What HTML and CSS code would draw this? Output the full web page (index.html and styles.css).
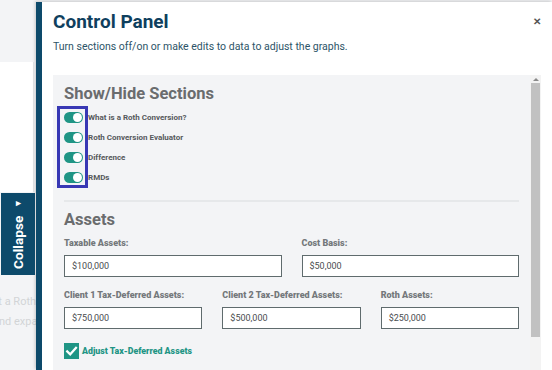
FILE: index.html
```html
<!DOCTYPE html>
<html lang="en">
<head>
<meta charset="utf-8">
<title>Control Panel</title>
<link rel="stylesheet" href="styles.css">
</head>
<body>
<main class="page">
  <div class="page-card"></div>
  <p class="ghost ghost-1">what a Roth</p>
  <p class="ghost ghost-2">and expa</p>
</main>

<aside class="drawer">
  <button class="collapse" type="button"><span class="collapse-label">Collapse <span class="caret">&#9660;</span></span></button>

  <header class="drawer-head">
    <div>
      <h1 class="title">Control Panel</h1>
      <p class="subtitle">Turn sections off/on or make edits to data to adjust the graphs.</p>
    </div>
    <button class="close" type="button" aria-label="Close">&#x2715;</button>
  </header>

  <div class="scroll-wrap">
    <div class="scroll">
      <section class="section">
        <h2 class="section-title">Show/Hide Sections</h2>
        <ul class="toggles">
          <li class="toggle-row"><span class="switch"></span><span class="toggle-label">What is a Roth Conversion?</span></li>
          <li class="toggle-row"><span class="switch"></span><span class="toggle-label">Roth Conversion Evaluator</span></li>
          <li class="toggle-row"><span class="switch"></span><span class="toggle-label">Difference</span></li>
          <li class="toggle-row"><span class="switch"></span><span class="toggle-label">RMDs</span></li>
          <li class="highlight" aria-hidden="true"></li>
        </ul>
      </section>
      <hr class="divider">
      <section class="section">
        <h2 class="section-title assets-title">Assets</h2>
        <div class="grid grid-2">
          <label class="field"><span class="field-label">Taxable Assets:</span><span class="input">$100,000</span></label>
          <label class="field"><span class="field-label">Cost Basis:</span><span class="input">$50,000</span></label>
        </div>
        <div class="grid grid-3">
          <label class="field"><span class="field-label">Client 1 Tax-Deferred Assets:</span><span class="input">$750,000</span></label>
          <label class="field"><span class="field-label">Client 2 Tax-Deferred Assets:</span><span class="input">$500,000</span></label>
          <label class="field"><span class="field-label">Roth Assets:</span><span class="input">$250,000</span></label>
        </div>
        <div class="check-row">
          <span class="checkbox"><svg width="15" height="16" viewBox="0 0 15 16"><path d="M3.2 8.4 L6.2 11.3 L12 4.8" fill="none" stroke="#fff" stroke-width="2.2" stroke-linecap="square"/></svg></span>
          <span class="check-label">Adjust Tax-Deferred Assets</span>
        </div>
      </section>
    </div>
    <div class="scrollbar">
      <span class="sb-arrow"></span>
      <span class="sb-thumb"></span>
    </div>
  </div>
</aside>
</body>
</html>
```

FILE: styles.css
```css
* { box-sizing: border-box; }

html, body {
  margin: 0;
  width: 552px;
  height: 370px;
  overflow: hidden;
}

body {
  background: #f3f4f6;
  font-family: Roboto, "Liberation Sans", sans-serif;
  position: relative;
}

.page {
  width: 36px;
  height: 370px;
  overflow: hidden;
  padding-top: 62px;
}

.page-card {
  width: 34px;
  height: 130px;
  background: #ffffff;
  border-right: 1px solid #e4e6e8;
}

.ghost {
  margin: 0;
  white-space: nowrap;
  font-size: 11px;
  line-height: 20px;
  color: #d2d4d6;
}

.ghost-1 { margin-top: 100px; margin-left: -22px; }
.ghost-2 { margin-left: -7px; }

.drawer {
  position: absolute;
  left: 36px;
  top: 2px;
  right: 0;
  bottom: 0;
  background: #ffffff;
  border-left: 6px solid #0d4a6b;
  box-shadow: -1px -1px 3px rgba(0, 0, 0, 0.18);
  padding: 0 11px;
  display: flex;
  flex-direction: column;
}

.collapse {
  position: absolute;
  left: -41px;
  top: 191px;
  width: 34px;
  height: 82px;
  border: 0;
  padding: 0;
  background: #0d4a6b;
  color: #fff;
  display: flex;
  align-items: center;
  justify-content: center;
  cursor: pointer;
}

.collapse-label {
  display: block;
  transform: rotate(-90deg);
  white-space: nowrap;
  font-family: Roboto, sans-serif;
  font-weight: 700;
  font-size: 13.5px;
  letter-spacing: 0.1px;
}

.caret {
  font-size: 9px;
  vertical-align: 2px;
  margin-left: 4px;
}

.drawer-head {
  display: flex;
  justify-content: space-between;
  align-items: flex-start;
  padding-top: 9px;
}

.title {
  margin: 0;
  font-size: 19px;
  line-height: 22px;
  font-weight: 700;
  color: #0f3f5e;
}

.subtitle {
  margin: 7px 0 0;
  font-size: 10.5px;
  line-height: 14px;
  color: #2d5468;
}

.close {
  border: 0;
  background: none;
  padding: 0;
  margin-top: 6px;
  font-size: 10px;
  line-height: 10px;
  font-weight: 700;
  color: #555;
  cursor: pointer;
}

.scroll-wrap {
  margin-top: 21px;
  flex: 1;
  display: flex;
  min-height: 0;
}

.scroll {
  flex: 1;
  background: #f3f4f6;
  padding: 9px 11px 0 11px;
  overflow: hidden;
}

.scrollbar {
  width: 11px;
  background: #f3f3f3;
  display: flex;
  flex-direction: column;
  align-items: center;
  padding: 0 1px;
}

.sb-arrow {
  width: 0;
  height: 0;
  margin: 3px 0 2px;
  border-left: 3px solid transparent;
  border-right: 3px solid transparent;
  border-bottom: 3px solid #8a8a8a;
}

.sb-thumb {
  width: 9px;
  height: 254px;
  background: #c1c1c1;
}

.section-title {
  margin: 0;
  font-size: 16.5px;
  line-height: 19px;
  font-weight: 700;
  color: #6a6c6e;
}

.toggles {
  list-style: none;
  margin: 4px 0 0;
  padding: 0;
  position: relative;
}

.toggle-row {
  height: 20px;
  display: flex;
  align-items: center;
  gap: 5px;
}

.switch {
  position: relative;
  width: 19px;
  height: 11px;
  border-radius: 6px;
  background: #1f9585;
  flex: none;
}

.switch::after {
  content: "";
  position: absolute;
  right: 1px;
  top: 1px;
  width: 9px;
  height: 9px;
  border-radius: 50%;
  background: #ffffff;
}

.toggle-label {
  font-size: 8px;
  font-weight: 700;
  color: #56595c;
}

.highlight {
  position: absolute;
  left: -7px;
  top: -1px;
  width: 31px;
  height: 82px;
  border: 3px solid #3838b4;
}

.divider {
  margin: 13px 0 0;
  border: 0;
  height: 2px;
  background: #e6e8ea;
}

.assets-title {
  margin-top: 8px;
}

.grid {
  display: grid;
  gap: 20px;
}

.grid-2 {
  grid-template-columns: 1fr 1fr;
  margin-top: 8px;
}

.grid-3 {
  grid-template-columns: 1fr 1fr 1fr;
  margin-top: 12px;
}

.field {
  display: flex;
  flex-direction: column;
  gap: 6px;
}

.field-label {
  font-size: 9px;
  line-height: 12px;
  font-weight: 900;
  color: #74787b;
}

.input {
  height: 22px;
  display: flex;
  align-items: center;
  padding-left: 7px;
  background: #ffffff;
  border: 1px solid #5f6b6d;
  font-size: 9px;
  color: #4a4d50;
}

.check-row {
  margin-top: 14px;
  display: flex;
  align-items: center;
  gap: 3px;
}

.checkbox {
  width: 15px;
  height: 16px;
  background: #1f9585;
  display: flex;
}

.check-label {
  font-size: 8.8px;
  font-weight: 900;
  color: #1f9585;
}
```
